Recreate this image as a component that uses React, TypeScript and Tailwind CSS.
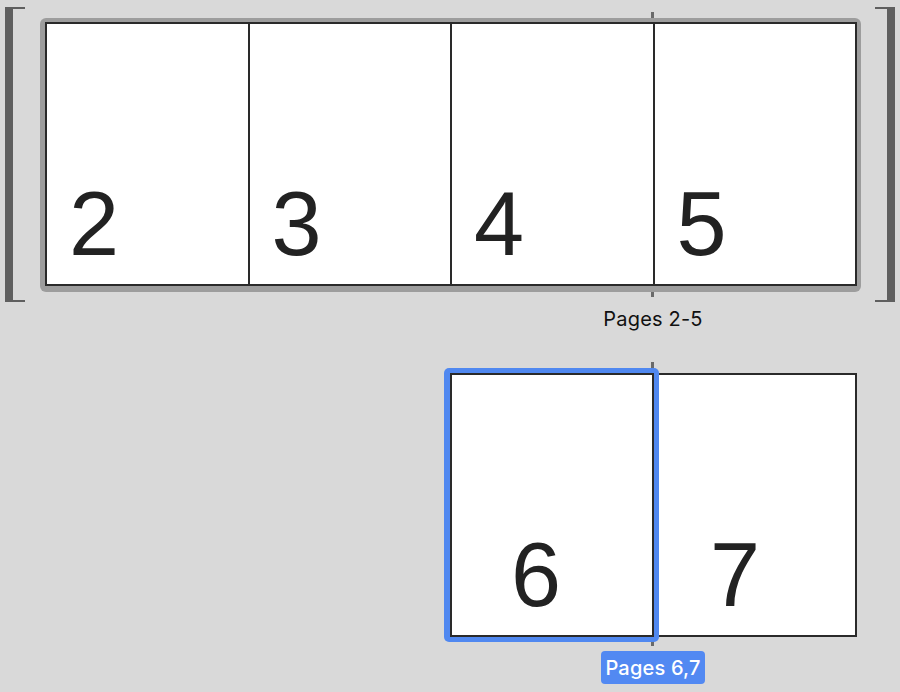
import React from "react";

const digitCls =
  "text-[90px] leading-none text-[#222222] [font-family:'Liberation_Sans',Arial,sans-serif]";

function TopPage({ n, first }: { n: string; first?: boolean }) {
  return (
    <div
      className={`flex-1 flex items-end pl-[22px] pb-[15px] ${
        first ? "" : "border-l-2 border-[#2a2a2a]"
      }`}
    >
      <span className={digitCls}>{n}</span>
    </div>
  );
}

export default function App() {
  return (
    <div className="w-[900px] h-[692px] bg-[#d9d9d9] overflow-hidden [font-family:Inter,'Noto_Sans',sans-serif]">
      {/* Top row */}
      <div className="flex items-start">
        <div className="mt-[7px] ml-[5px] w-[20px] h-[295px] border-l-[8px] border-y-2 border-[#5f5f5f]" />
        <div className="ml-[15px] mt-[12px] w-[821px] flex flex-col">
          <div className="ml-[611px] w-[3px] h-[6px] bg-[#6a6a6a]" />
          <div className="bg-[#9d9d9d] rounded-[6px] pl-[5px] pr-[4px] pt-[4px] pb-[6px]">
            <div className="w-[812px] h-[264px] bg-white border-2 border-[#2a2a2a] flex">
              <TopPage n="2" first />
              <TopPage n="3" />
              <TopPage n="4" />
              <TopPage n="5" />
            </div>
          </div>
          <div className="ml-[611px] w-[3px] h-[5px] bg-[#6a6a6a]" />
          <div className="ml-[513px] w-[200px] mt-[10px] text-center text-[20px] leading-[24px] text-[#111111] tracking-[0.2px]">
            Pages 2-5
          </div>
        </div>
        <div className="ml-[14px] mt-[7px] w-[20px] h-[295px] border-r-[8px] border-y-2 border-[#5f5f5f]" />
      </div>

      {/* Bottom spread */}
      <div className="ml-[444px] mt-[31px] flex flex-col">
        <div className="ml-[207px] w-[3px] h-[6px] bg-[#6a6a6a]" />
        <div className="flex items-start">
          <div className="relative z-10 bg-[#5088f0] rounded-[5px] pl-[6px] pr-[5px] py-[5px]">
            <div className="w-[204px] h-[264px] bg-white border-2 border-[#2a2a2a] flex items-end pl-[59px] pb-[15px]">
              <span className={digitCls}>6</span>
            </div>
          </div>
          <div className="-ml-[6px] mt-[5px] w-[204px] h-[264px] bg-white border-2 border-[#2a2a2a] flex items-end pl-[55px] pb-[15px]">
            <span className={digitCls}>7</span>
          </div>
        </div>
        <div className="ml-[207px] w-[3px] h-[4px] bg-[#6a6a6a]" />
        <div className="ml-[109px] w-[200px] mt-[5px] flex justify-center">
          <div className="h-[33px] px-[4px] rounded-[4px] bg-[#5289f2] text-white text-[20px] font-medium flex items-center tracking-[0.2px]">
            Pages 6,7
          </div>
        </div>
      </div>
    </div>
  );
}
